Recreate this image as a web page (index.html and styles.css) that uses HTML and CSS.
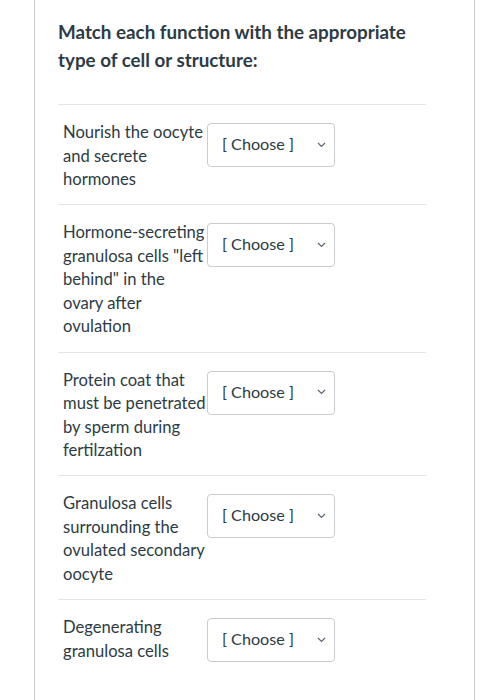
FILE: index.html
```html
<!DOCTYPE html>
<html>
<head>
<meta charset="utf-8">
<link rel="stylesheet" href="styles.css">
</head>
<body>
<div class="card">
  <h2 class="title">Match each function with the appropriate type of cell or structure:</h2>
  <div class="rows">
    <div class="row">
      <div class="label">Nourish the oocyte and secrete hormones</div>
      <div class="select"><span>[ Choose ]</span><svg class="chev" width="9" height="6" viewBox="0 0 9 6"><path d="M1 1 L4.5 4.5 L8 1" fill="none" stroke="#5a6670" stroke-width="1.2"/></svg></div>
    </div>
    <div class="row">
      <div class="label">Hormone-secreting granulosa cells "left behind" in the ovary after ovulation</div>
      <div class="select"><span>[ Choose ]</span><svg class="chev" width="9" height="6" viewBox="0 0 9 6"><path d="M1 1 L4.5 4.5 L8 1" fill="none" stroke="#5a6670" stroke-width="1.2"/></svg></div>
    </div>
    <div class="row">
      <div class="label">Protein coat that must be penetrated by sperm during fertilzation</div>
      <div class="select"><span>[ Choose ]</span><svg class="chev" width="9" height="6" viewBox="0 0 9 6"><path d="M1 1 L4.5 4.5 L8 1" fill="none" stroke="#5a6670" stroke-width="1.2"/></svg></div>
    </div>
    <div class="row">
      <div class="label">Granulosa cells surrounding the ovulated secondary oocyte</div>
      <div class="select"><span>[ Choose ]</span><svg class="chev" width="9" height="6" viewBox="0 0 9 6"><path d="M1 1 L4.5 4.5 L8 1" fill="none" stroke="#5a6670" stroke-width="1.2"/></svg></div>
    </div>
    <div class="row">
      <div class="label">Degenerating granulosa cells</div>
      <div class="select"><span>[ Choose ]</span><svg class="chev" width="9" height="6" viewBox="0 0 9 6"><path d="M1 1 L4.5 4.5 L8 1" fill="none" stroke="#5a6670" stroke-width="1.2"/></svg></div>
    </div>
  </div>
</div>
</body>
</html>
```
FILE: styles.css
```css
html, body {
  margin: 0;
  padding: 0;
  background: #ffffff;
}
body {
  font-family: Lato, "Open Sans", sans-serif;
  color: #2d3b45;
  height: 700px;
  overflow: hidden;
}
.card {
  margin-left: 34px;
  width: 392px;
  height: 760px;
  border: 1px solid #c9cdd1;
  border-top: none;
  padding: 0 24px 0 23px;
  box-sizing: content-box;
}
.title {
  margin: 0;
  padding-top: 18px;
  padding-bottom: 30px;
  font-size: 18.8px;
  font-weight: 700;
  line-height: 28px;
  color: #2d3b45;
  border-bottom: 1px solid #e3e6e8;
  width: 368px;
}
.rows {
  width: 368px;
}
.row {
  display: flex;
  align-items: flex-start;
  padding: 16px 0 12.8px 5px;
  border-bottom: 1px solid #e3e6e8;
}
.row:last-child {
  border-bottom: none;
}
.label {
  width: 144px;
  flex: none;
  font-size: 16.6px;
  line-height: 23.5px;
}
.select {
  margin-top: 2px;
  width: 128px;
  height: 44px;
  box-sizing: border-box;
  border: 1px solid #c9cdd1;
  border-radius: 4px;
  background: #fff;
  display: flex;
  align-items: center;
  padding: 0 8px 0 14px;
  font-size: 16.2px;
  color: #2d3b45;
}
.select span {
  flex: 1;
  margin-top: -3px;
}
.chev {
  display: block;
  margin-top: -1px;
}
```
